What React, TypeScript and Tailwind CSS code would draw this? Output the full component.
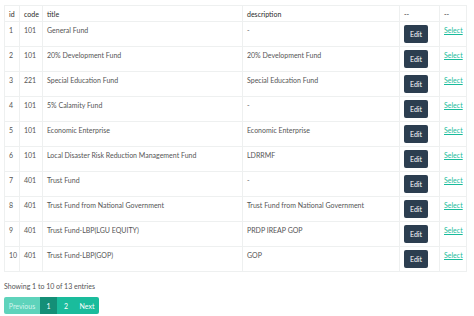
const rows = [
  { id: 1, code: "101", title: "General Fund", description: "-" },
  { id: 2, code: "101", title: "20% Development Fund", description: "20% Development Fund" },
  { id: 3, code: "221", title: "Special Education Fund", description: "Special Education Fund" },
  { id: 4, code: "101", title: "5% Calamity Fund", description: "-" },
  { id: 5, code: "101", title: "Economic Enterprise", description: "Economic Enterprise" },
  { id: 6, code: "101", title: "Local Disaster Risk Reduction Management Fund", description: "LDRRMF" },
  { id: 7, code: "401", title: "Trust Fund", description: "-" },
  { id: 8, code: "401", title: "Trust Fund from National Government", description: "Trust Fund from National Government" },
  { id: 9, code: "401", title: "Trust Fund-LBP(LGU EQUITY)", description: "PRDP IREAP GOP" },
  { id: 10, code: "401", title: "Trust Fund-LBP(GOP)", description: "GOP" },
];

export default function App() {
  return (
    <div className="w-[474px] h-[316px] bg-white px-1 pt-[5px] text-[7px] leading-[10px] text-[#555]" style={{ fontFamily: "Lato, 'Liberation Sans', sans-serif" }}>
      <table className="table-fixed border-collapse w-[462px]">
        <colgroup>
          <col className="w-[15px]" />
          <col className="w-[23px]" />
          <col className="w-[200px]" />
          <col className="w-[157px]" />
          <col className="w-[40px]" />
          <col className="w-[27px]" />
        </colgroup>
        <thead>
          <tr className="h-[16px] text-[#2a2a2a]">
            <th className="border border-[#eef0f0] px-1 text-left align-middle font-normal">id</th>
            <th className="border border-[#eef0f0] px-1 text-left align-middle font-normal">code</th>
            <th className="border border-[#eef0f0] px-1 text-left align-middle font-normal">title</th>
            <th className="border border-[#eef0f0] px-1 text-left align-middle font-normal">description</th>
            <th className="border border-[#eef0f0] px-1 text-left align-middle font-normal">--</th>
            <th className="border border-[#eef0f0] px-1 text-left align-middle font-normal">--</th>
          </tr>
        </thead>
        <tbody>
          {rows.map((r) => (
            <tr key={r.id} className="h-[24.6px]">
              <td className="border border-[#eef0f0] px-1 pt-[3px] align-top">{r.id}</td>
              <td className="border border-[#eef0f0] px-1 pt-[3px] align-top">{r.code}</td>
              <td className="border border-[#eef0f0] px-1 pt-[3px] align-top whitespace-nowrap">{r.title}</td>
              <td className="border border-[#eef0f0] px-1 pt-[3px] align-top whitespace-nowrap">{r.description}</td>
              <td className="border border-[#eef0f0] px-1 pt-[3px] pb-[3px] align-top">
                <button className="w-[24px] h-[18px] rounded-[2px] bg-[#2c3e50] text-white text-[7px] flex items-center justify-center">
                  Edit
                </button>
              </td>
              <td className="border border-[#eef0f0] px-1 pt-[3px] align-top">
                <a className="text-[#1abc9c] underline">Select</a>
              </td>
            </tr>
          ))}
        </tbody>
      </table>
      <div className="mt-[9px]">Showing 1 to 10 of 13 entries</div>
      <div className="mt-[6px] flex h-[17px] text-white">
        <span className="w-[36px] flex items-center justify-center bg-[#5ed3bb] rounded-l-[2px] text-[#d5f5ee]">Previous</span>
        <span className="w-[17px] flex items-center justify-center bg-[#148f77]">1</span>
        <span className="w-[18px] flex items-center justify-center bg-[#1abc9c]">2</span>
        <span className="w-[24px] flex items-center justify-center bg-[#1abc9c] rounded-r-[2px]">Next</span>
      </div>
    </div>
  );
}
